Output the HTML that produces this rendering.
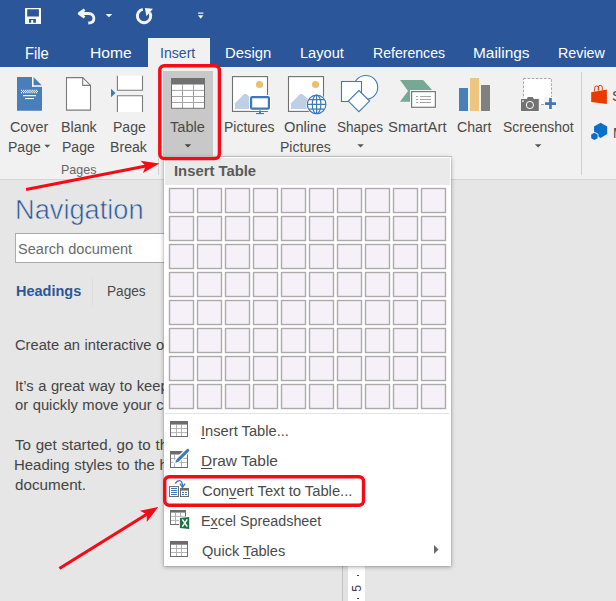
<!DOCTYPE html>
<html><head><meta charset="utf-8">
<style>
*{margin:0;padding:0;box-sizing:border-box}
html,body{width:616px;height:601px;overflow:hidden;background:#e6e6e6}
body{position:relative;font-family:"Liberation Sans",sans-serif;color:#444}
.abs{position:absolute}
.t{position:absolute;white-space:nowrap;line-height:1;transform-origin:0 0}
.light{-webkit-text-stroke:0.6px #e6e6e6}
#title{left:0;top:0;width:616px;height:67px;background:#2b579a}
#ribbon{left:0;top:67px;width:616px;height:113px;background:#f1f1f1;border-bottom:1px solid #d4d4d4}
u{text-decoration:underline;text-underline-offset:2px;text-decoration-thickness:1px}
svg{position:absolute;overflow:visible}
</style></head><body>
<div id="title" class="abs"></div>
<div id="ribbon" class="abs"></div>

<!-- QAT icons -->
<svg style="left:25px;top:8px" width="16" height="16" viewBox="0 0 16 16"><path d="M0.500 0H15.500Q16 0 16 0.500V15.500Q16 16 15.500 16H0.500Q0 16 0 15.500V0.500Q0 0 0.500 0Z M2.200 1.300V8.600H13.900V1.300Z M4 11V14.800H6.200V12H8.200V14.800H10.900V11Z" fill="#fbfaf6" fill-rule="evenodd"/></svg>
<svg style="left:0;top:0" width="220" height="30" viewBox="0 0 220 30"><path d="M84.600 9.700 L79.200 13.500 L84.600 17.300 M79.500 13.500 H88.500 C92.200 13.500 93.900 15.800 93.900 18.400 C93.900 21.200 92.200 22.900 88.300 23" fill="none" stroke="#f4f4f4" stroke-width="2.800" stroke-linejoin="round"/>
<path d="M105.600 14 H112.300 L108.950 17.300 Z" fill="#f4f4f4"/>
<path d="M142.800 9.450 A6.700 6.700 0 1 0 149.800 12.600" fill="none" stroke="#f4f4f4" stroke-width="2.900"/><path d="M144.900 8 L153 8.700 L146.400 16.200 Z" fill="#f4f4f4"/>
<rect x="198" y="12.500" width="5.400" height="1.200" fill="#f4f4f4"/><path d="M198 15.300 H203.400 L200.700 18.700 Z" fill="#f4f4f4"/></svg>

<!-- Insert tab -->
<div class="abs" style="left:147.500px;top:38px;width:62.500px;height:30px;background:#f1f1f1"></div>

<!-- Table button pressed bg -->
<div class="abs" style="left:163px;top:71px;width:50px;height:86px;background:#c8c8c8"></div>
<div class="abs" style="left:581px;top:72px;width:1px;height:103px;background:#d0d0d0"></div>
<div class="abs" style="left:158px;top:72px;width:1px;height:103px;background:#cfcfcf"></div>

<svg style="left:0;top:0" width="616" height="601" viewBox="0 0 616 601"><g><path d="M17 77H32V86.500H42V110.800H17Z" fill="#4a7ebb"/><path d="M33.400 77L42 85.400H33.400Z" fill="#4a7ebb"/>
<rect x="32" y="77" width="1.300" height="9.500" fill="#fff"/><rect x="32" y="85.500" width="10" height="1.100" fill="#fff"/>
<g fill="#fff"><rect x="23" y="95.100" width="13" height="1.100"/><rect x="25" y="98" width="9" height="1.100"/></g>
<g stroke="#fff" stroke-width="1.100" stroke-dasharray="1.060 1.060" fill="none"><path d="M21 90.400h17M21 92.600h17"/><path d="M21 91.500h17" stroke-dashoffset="1.060"/></g></g>
<path d="M66.500 77.600H82.700L90.500 85.400V110.100H66.500Z" fill="#fff" stroke="#7b7b7b" stroke-width="1.100"/><path d="M82.700 77.600V85.400H90.500" fill="none" stroke="#7b7b7b" stroke-width="1.100"/>
<path d="M117.400 75.700V90.200H142.500V75.700Z" fill="#fff" stroke="none"/><path d="M117.400 75.700V90.200H142.500V75.700" fill="none" stroke="#7b7b7b" stroke-width="1.100"/><path d="M117.400 112V95.700H142.500V112Z" fill="#fff"/><path d="M117.400 112V95.700H142.500V112" fill="none" stroke="#7b7b7b" stroke-width="1.100"/><path d="M111 88.800L115.500 93L111 97.200Z" fill="#3d78b8"/>
<rect x="171" y="78" width="34" height="30.8" fill="#fff"/><rect x="182.0" y="84.5" width="1" height="24.3" fill="#a4a4a4"/><rect x="193.0" y="84.5" width="1" height="24.3" fill="#a4a4a4"/><rect x="171" y="89.9" width="34" height="1" fill="#a4a4a4"/><rect x="171" y="96.0" width="34" height="1" fill="#a4a4a4"/><rect x="171" y="102.0" width="34" height="1" fill="#a4a4a4"/><rect x="171" y="78" width="34" height="6.5" fill="#707070"/><rect x="171.5" y="78.5" width="33" height="29.8" fill="none" stroke="#707070" stroke-width="1"/>
<path d="M184.700 144.200H191.200L187.950 147.500Z" fill="#444"/>
<rect x="232.5" y="76.600" width="35" height="34.800" fill="#fff" stroke="#6f6f6f" stroke-width="1.100"/><circle cx="259.5" cy="84.500" r="3.600" fill="#eabf72"/><path d="M235 108.900V103.300L244 94.100H246.500L252 99V108.900Z" fill="#bed0e6"/>
<rect x="249" y="95" width="22" height="16" fill="#fff"/><rect x="251.100" y="97.100" width="17.800" height="11.600" rx="1" fill="#fff" stroke="#3d78b8" stroke-width="2.200"/><rect x="259" y="110.500" width="2" height="2.600" fill="#3d78b8"/><rect x="256" y="113" width="8" height="1.100" fill="#3d78b8"/>
<rect x="288.5" y="76.600" width="35" height="34.800" fill="#fff" stroke="#6f6f6f" stroke-width="1.100"/><circle cx="315.5" cy="84.500" r="3.600" fill="#eabf72"/><path d="M291 108.900V103.300L300 94.100H302.500L308 99V108.900Z" fill="#bed0e6"/>
<circle cx="316.600" cy="104.400" r="10.500" fill="#fff"/><g fill="none" stroke="#3d78b8" stroke-width="1.200"><circle cx="316.600" cy="104.400" r="9.300"/><ellipse cx="316.600" cy="104.400" rx="4.300" ry="9.300"/><path d="M316.600 95.100V113.700M307.300 104.400H325.900M309 99.700H324.200M309 109.100H324.200"/></g>
<g fill="#fff" stroke="#3d78b8" stroke-width="1.100"><circle cx="365.800" cy="87.400" r="11.900"/><rect x="341.500" y="81.500" width="20" height="20"/><path d="M358.900 90.500L369.600 101.100L358.900 111.700L348.300 101.100Z"/></g>
<path d="M357.300 144.200H363.800L360.550 147.500Z" fill="#555"/>
<path d="M400 80.100H423.100L431.700 89.500V101.700H400L408 91Z" fill="#77a896"/><rect x="410" y="90" width="27" height="19" fill="#f4f4f4"/><rect x="411.600" y="91.600" width="23.800" height="15.700" fill="#fff" stroke="#7a7a7a" stroke-width="1.200"/><g fill="#a6a6a6"><rect x="416" y="96" width="2.200" height="1"/><rect x="420" y="96" width="11" height="1"/><rect x="416" y="99" width="2.200" height="1"/><rect x="420" y="99" width="11" height="1"/><rect x="416" y="102" width="2.200" height="1"/><rect x="420" y="102" width="11" height="1"/></g>
<rect x="459" y="88" width="9" height="23" fill="#4a80b9"/><rect x="470" y="78" width="9" height="33" fill="#edc77f"/><rect x="481" y="85" width="9" height="26" fill="#808080"/>
<rect x="523.500" y="78.500" width="28" height="26" fill="#fff" stroke="#a8a8a8" stroke-width="1" stroke-dasharray="2.600 1.500"/><rect x="520" y="98" width="20" height="14" fill="#f4f4f4"/><rect x="544" y="97" width="13" height="13" fill="#f4f4f4"/><path d="M521 99H526.800L527.800 97H532.800L533.800 99H538.800V110.900H521Z" fill="#737373"/><circle cx="529.900" cy="105" r="3.600" fill="#737373" stroke="#fff" stroke-width="1"/><rect x="522.200" y="100.400" width="1.500" height="1.500" fill="#fff"/><rect x="541.200" y="104" width="2.800" height="0.900" fill="#a8a8a8"/><path d="M545 102.200H549.100V98.100H551.800V102.200H556V104.900H551.800V108.900H549.100V104.900H545Z" fill="#3d78b8"/>
<path d="M534.900 144.200H541.400L538.150 147.500Z" fill="#555"/>
<path d="M44.300 144.700H50.300L47.300 147.700Z" fill="#555"/>
<path d="M591.200 92.300L606.900 89.400V104L591.200 101.900Z" fill="#e83b00"/><path d="M594.600 91.500V88.300Q594.600 86 596.700 86Q598.700 86 598.700 88.300V90.500M598.200 90.500V87.600Q598.200 85.300 600.200 85.300Q602.300 85.300 602.300 87.600V90" fill="none" stroke="#e83b00" stroke-width="1"/>
<path d="M600.60 122.70L607.18 126.50L607.18 134.10L600.60 137.90L594.02 134.10L594.02 126.50Z" fill="#0b6fca"/><path d="M594.40 131.80L598.38 134.10L598.38 138.70L594.40 141.00L590.42 138.70L590.42 134.10Z" fill="#f1f1f1"/><path d="M594.40 132.70L597.60 134.55L597.60 138.25L594.40 140.10L591.20 138.25L591.20 134.55Z" fill="#0b6fca"/></svg>

<!-- Nav pane -->
<div class="abs" style="left:15px;top:233px;width:160px;height:30px;background:#fff;border:1px solid #ababab"></div>
<div class="abs" style="left:92px;top:277px;width:1px;height:30px;background:#dedede"></div>
<div class="t" style="left:24.85px;top:46.00px;font-size:15.6px;color:#fff;transform:scaleX(0.9465)">File</div>
<div class="t" style="left:90.08px;top:45.00px;font-size:15.4px;color:#fff;transform:scaleX(1.0179)">Home</div>
<div class="t" style="left:159.88px;top:45.00px;font-size:15.4px;color:#2b579a;transform:scaleX(0.9159)">Insert</div>
<div class="t" style="left:224.74px;top:45.00px;font-size:15.4px;color:#fff;transform:scaleX(0.9644)">Design</div>
<div class="t" style="left:300.15px;top:45.00px;font-size:15.4px;color:#fff;transform:scaleX(0.9492)">Layout</div>
<div class="t" style="left:372.68px;top:45.00px;font-size:15.4px;color:#fff;transform:scaleX(0.9153)">References</div>
<div class="t" style="left:473.20px;top:45.00px;font-size:15.4px;color:#fff;transform:scaleX(1.0008)">Mailings</div>
<div class="t" style="left:558.47px;top:45.00px;font-size:15.4px;color:#fff;transform:scaleX(0.9275)">Review</div>
<div class="t" style="left:9.90px;top:119.00px;font-size:15.4px;color:#4a4a4a;transform:scaleX(0.9309)">Cover</div>
<div class="t" style="left:8.09px;top:139.00px;font-size:15.4px;color:#4a4a4a;transform:scaleX(0.9132)">Page</div>
<div class="t" style="left:61.37px;top:119.00px;font-size:15.4px;color:#4a4a4a;transform:scaleX(0.9285)">Blank</div>
<div class="t" style="left:62.19px;top:139.00px;font-size:15.4px;color:#4a4a4a;transform:scaleX(0.9132)">Page</div>
<div class="t" style="left:112.59px;top:119.00px;font-size:15.4px;color:#4a4a4a;transform:scaleX(0.9132)">Page</div>
<div class="t" style="left:110.28px;top:139.00px;font-size:15.4px;color:#4a4a4a;transform:scaleX(0.9188)">Break</div>
<div class="t" style="left:170.20px;top:119.00px;font-size:15.4px;color:#4a4a4a;transform:scaleX(0.9494)">Table</div>
<div class="t" style="left:223.99px;top:119.00px;font-size:15.4px;color:#4a4a4a;transform:scaleX(0.9071)">Pictures</div>
<div class="t" style="left:284.40px;top:119.00px;font-size:15.4px;color:#4a4a4a;transform:scaleX(0.9515)">Online</div>
<div class="t" style="left:279.59px;top:139.00px;font-size:15.4px;color:#4a4a4a;transform:scaleX(0.9126)">Pictures</div>
<div class="t" style="left:336.50px;top:119.00px;font-size:15.4px;color:#4a4a4a;transform:scaleX(0.8799)">Shapes</div>
<div class="t" style="left:388.40px;top:119.00px;font-size:15.4px;color:#4a4a4a;transform:scaleX(0.9636)">SmartArt</div>
<div class="t" style="left:456.70px;top:119.00px;font-size:15.4px;color:#4a4a4a;transform:scaleX(0.9150)">Chart</div>
<div class="t" style="left:502.60px;top:119.00px;font-size:15.4px;color:#4a4a4a;transform:scaleX(0.9086)">Screenshot</div>
<div class="t" style="left:612.40px;top:88.00px;font-size:15.4px;color:#4a4a4a;transform:scaleX(0.9385)">Store</div>
<div class="t" style="left:612.72px;top:125.00px;font-size:15.4px;color:#4a4a4a;transform:scaleX(0.8783)">My Add-ins</div>
<div class="t" style="left:60.63px;top:164.00px;font-size:12.8px;color:#666;transform:scaleX(0.9746)">Pages</div>
<div class="t light" style="left:15.08px;top:197.00px;font-size:27px;color:#2b579a;transform:scaleX(1.0083)">Navigation</div>
<div class="t" style="left:17.70px;top:241.00px;font-size:15.1px;color:#6a6a6a;transform:scaleX(0.9647)">Search document</div>
<div class="t" style="left:16.15px;top:283.00px;font-size:15.3px;color:#2b579a;transform:scaleX(0.9474);font-weight:bold">Headings</div>
<div class="t" style="left:106.70px;top:283.00px;font-size:15.1px;color:#4a4a4a;transform:scaleX(0.9042)">Pages</div>
<div class="t" style="left:14.90px;top:477.00px;font-size:15.4px;color:#444;transform:scaleX(0.9888)">document.</div>
<div class="t" style="left:14.70px;top:337.00px;font-size:15.4px;color:#444;transform:scaleX(0.9547);word-spacing:0.5px">Create an interactive o</div>
<div class="t" style="left:14.84px;top:378.00px;font-size:15.4px;color:#444;transform:scaleX(0.9571);word-spacing:0.5px">It’s a great way to keep</div>
<div class="t" style="left:15.30px;top:397.00px;font-size:15.4px;color:#444;transform:scaleX(0.9586);word-spacing:0.5px">or quickly move your c</div>
<div class="t" style="left:14.60px;top:437.00px;font-size:15.4px;color:#444;transform:scaleX(0.9834);word-spacing:0.5px">To get started, go to th</div>
<div class="t" style="left:13.93px;top:457.00px;font-size:15.4px;color:#444;transform:scaleX(0.9703);word-spacing:0.5px">Heading styles to the h</div>

<!-- ruler -->
<div class="abs" style="left:343px;top:560px;width:5px;height:41px;background:#e2e2e2"></div>
<div class="abs" style="left:342px;top:560px;width:1px;height:41px;background:#c2c2c2"></div>
<div class="abs" style="left:348px;top:560px;width:17px;height:41px;background:#fff"></div>
<div class="abs" style="left:357px;top:575px;width:2px;height:1px;background:#444"></div>
<div class="abs" style="left:357px;top:598px;width:2px;height:1px;background:#444"></div>
<div class="t" style="left:354.200px;top:582px;font-size:12.400px;color:#333;transform:rotate(-90deg);transform-origin:center">5</div>

<!-- Dropdown -->
<div class="abs" id="menu" style="left:164px;top:157px;width:287px;height:409px;background:#fff;box-shadow:0 0 1px rgba(0,0,0,.3),0 0.500px 4.500px rgba(0,0,0,.33)"></div>
<div class="abs" style="left:164px;top:156px;width:287.500px;height:1px;background:#bbb"></div>
<div class="abs" style="left:165px;top:158px;width:285px;height:26.600px;background:#eaeaea"></div>
<svg style="left:0;top:0" width="616" height="601" viewBox="0 0 616 601"><g fill="#f6f1f8" stroke="#ababab" stroke-width="1.4"><rect x="169.5" y="188.5" width="24" height="24"/><rect x="197.5" y="188.5" width="24" height="24"/><rect x="225.5" y="188.5" width="24" height="24"/><rect x="253.5" y="188.5" width="24" height="24"/><rect x="281.5" y="188.5" width="24" height="24"/><rect x="309.5" y="188.5" width="24" height="24"/><rect x="337.5" y="188.5" width="24" height="24"/><rect x="365.5" y="188.5" width="24" height="24"/><rect x="393.5" y="188.5" width="24" height="24"/><rect x="421.5" y="188.5" width="24" height="24"/><rect x="169.5" y="216.5" width="24" height="24"/><rect x="197.5" y="216.5" width="24" height="24"/><rect x="225.5" y="216.5" width="24" height="24"/><rect x="253.5" y="216.5" width="24" height="24"/><rect x="281.5" y="216.5" width="24" height="24"/><rect x="309.5" y="216.5" width="24" height="24"/><rect x="337.5" y="216.5" width="24" height="24"/><rect x="365.5" y="216.5" width="24" height="24"/><rect x="393.5" y="216.5" width="24" height="24"/><rect x="421.5" y="216.5" width="24" height="24"/><rect x="169.5" y="244.5" width="24" height="24"/><rect x="197.5" y="244.5" width="24" height="24"/><rect x="225.5" y="244.5" width="24" height="24"/><rect x="253.5" y="244.5" width="24" height="24"/><rect x="281.5" y="244.5" width="24" height="24"/><rect x="309.5" y="244.5" width="24" height="24"/><rect x="337.5" y="244.5" width="24" height="24"/><rect x="365.5" y="244.5" width="24" height="24"/><rect x="393.5" y="244.5" width="24" height="24"/><rect x="421.5" y="244.5" width="24" height="24"/><rect x="169.5" y="272.5" width="24" height="24"/><rect x="197.5" y="272.5" width="24" height="24"/><rect x="225.5" y="272.5" width="24" height="24"/><rect x="253.5" y="272.5" width="24" height="24"/><rect x="281.5" y="272.5" width="24" height="24"/><rect x="309.5" y="272.5" width="24" height="24"/><rect x="337.5" y="272.5" width="24" height="24"/><rect x="365.5" y="272.5" width="24" height="24"/><rect x="393.5" y="272.5" width="24" height="24"/><rect x="421.5" y="272.5" width="24" height="24"/><rect x="169.5" y="300.5" width="24" height="24"/><rect x="197.5" y="300.5" width="24" height="24"/><rect x="225.5" y="300.5" width="24" height="24"/><rect x="253.5" y="300.5" width="24" height="24"/><rect x="281.5" y="300.5" width="24" height="24"/><rect x="309.5" y="300.5" width="24" height="24"/><rect x="337.5" y="300.5" width="24" height="24"/><rect x="365.5" y="300.5" width="24" height="24"/><rect x="393.5" y="300.5" width="24" height="24"/><rect x="421.5" y="300.5" width="24" height="24"/><rect x="169.5" y="328.5" width="24" height="24"/><rect x="197.5" y="328.5" width="24" height="24"/><rect x="225.5" y="328.5" width="24" height="24"/><rect x="253.5" y="328.5" width="24" height="24"/><rect x="281.5" y="328.5" width="24" height="24"/><rect x="309.5" y="328.5" width="24" height="24"/><rect x="337.5" y="328.5" width="24" height="24"/><rect x="365.5" y="328.5" width="24" height="24"/><rect x="393.5" y="328.5" width="24" height="24"/><rect x="421.5" y="328.5" width="24" height="24"/><rect x="169.5" y="356.5" width="24" height="24"/><rect x="197.5" y="356.5" width="24" height="24"/><rect x="225.5" y="356.5" width="24" height="24"/><rect x="253.5" y="356.5" width="24" height="24"/><rect x="281.5" y="356.5" width="24" height="24"/><rect x="309.5" y="356.5" width="24" height="24"/><rect x="337.5" y="356.5" width="24" height="24"/><rect x="365.5" y="356.5" width="24" height="24"/><rect x="393.5" y="356.5" width="24" height="24"/><rect x="421.5" y="356.5" width="24" height="24"/><rect x="169.5" y="384.5" width="24" height="24"/><rect x="197.5" y="384.5" width="24" height="24"/><rect x="225.5" y="384.5" width="24" height="24"/><rect x="253.5" y="384.5" width="24" height="24"/><rect x="281.5" y="384.5" width="24" height="24"/><rect x="309.5" y="384.5" width="24" height="24"/><rect x="337.5" y="384.5" width="24" height="24"/><rect x="365.5" y="384.5" width="24" height="24"/><rect x="393.5" y="384.5" width="24" height="24"/><rect x="421.5" y="384.5" width="24" height="24"/></g></svg>
<div class="abs" style="left:165px;top:413px;width:284px;height:1px;background:#e2e5e8"></div>
<div class="t" style="left:174.20px;top:164.00px;font-size:14.2px;color:#5a5a5a;transform:scaleX(1.0446);font-weight:bold">Insert Table</div>
<div class="t" style="left:201.25px;top:423.00px;font-size:15.4px;color:#4a4a4a;transform:scaleX(0.9544)"><u>I</u>nsert Table...</div>
<div class="t" style="left:201.20px;top:453.00px;font-size:15.4px;color:#4a4a4a;transform:scaleX(1.0024)"><u>D</u>raw Table</div>
<div class="t" style="left:202.20px;top:483.00px;font-size:15.4px;color:#4a4a4a;transform:scaleX(0.9589)">Con<u>v</u>ert Text to Table...</div>
<div class="t" style="left:201.27px;top:513.00px;font-size:15.4px;color:#4a4a4a;transform:scaleX(0.9309)">E<u>x</u>cel Spreadsheet</div>
<div class="t" style="left:202.20px;top:543.00px;font-size:15.4px;color:#4a4a4a;transform:scaleX(0.9479)">Quick <u>T</u>ables</div>
<svg style="left:0;top:0" width="616" height="601" viewBox="0 0 616 601"><rect x="170" y="421" width="18" height="16" fill="#fff"/><rect x="176.0" y="424.6" width="1" height="12.4" fill="#b2b2b2"/><rect x="181.0" y="424.6" width="1" height="12.4" fill="#b2b2b2"/><rect x="170" y="428.1" width="18" height="1" fill="#b2b2b2"/><rect x="170" y="432.1" width="18" height="1" fill="#b2b2b2"/><rect x="170" y="421" width="18" height="3.6" fill="#6c6c6c"/><rect x="170.5" y="421.5" width="17" height="15" fill="none" stroke="#6c6c6c" stroke-width="1"/>
<rect x="170" y="451" width="18" height="17" fill="#fff"/><rect x="174.0" y="454.5" width="1" height="13.5" fill="#b2b2b2"/><rect x="181.0" y="454.5" width="1" height="13.5" fill="#b2b2b2"/><rect x="170" y="457.9" width="18" height="1" fill="#b2b2b2"/><rect x="170" y="461.9" width="18" height="1" fill="#b2b2b2"/><rect x="170" y="451" width="18" height="3.5" fill="#6c6c6c"/><rect x="170.5" y="451.5" width="17" height="16" fill="none" stroke="#6c6c6c" stroke-width="1"/>
<path d="M189.500 448.500L174.500 463.500" stroke="#fff" stroke-width="5.500"/><path d="M187.700 450.400L177.500 460.600" stroke="#3d78b8" stroke-width="2.900"/><path d="M176.300 459.400L178.700 461.800L175.300 462.800Z" fill="#3d78b8"/><path d="M188.800 449.300L187.300 450.800" stroke="#3d78b8" stroke-width="2.400"/>
<rect x="169.500" y="486.600" width="9" height="9.900" fill="#fff" stroke="#6c6c6c" stroke-width="1"/><g fill="#3d78b8"><rect x="171" y="488" width="6" height="1"/><rect x="171" y="490" width="6" height="1"/><rect x="171" y="492" width="6" height="1"/><rect x="171" y="494" width="6" height="1"/></g><rect x="180.500" y="488.500" width="8" height="8" fill="#fff" stroke="#6c6c6c" stroke-width="1"/><rect x="180" y="488" width="9" height="2.600" fill="#6c6c6c"/><g fill="#3d78b8"><rect x="182" y="492" width="2" height="1"/><rect x="185" y="492" width="2" height="1"/><rect x="182" y="494" width="2" height="1"/><rect x="185" y="494" width="2" height="1"/></g><path d="M175.300 483.600Q176.800 480.600 179.500 480.600Q182.500 480.600 182.500 486.800" fill="none" stroke="#3d78b8" stroke-width="1.300"/><path d="M180 483.600L182.500 487.400L185 483.600" fill="none" stroke="#3d78b8" stroke-width="1.500"/>
<rect x="170" y="510" width="16" height="15" fill="#fff"/><rect x="175.0" y="512.6" width="1" height="12.4" fill="#b2b2b2"/><rect x="180.0" y="512.6" width="1" height="12.4" fill="#b2b2b2"/><rect x="170" y="515.9" width="16" height="1" fill="#b2b2b2"/><rect x="170" y="519.9" width="16" height="1" fill="#b2b2b2"/><rect x="170" y="510" width="16" height="2.6" fill="#6c6c6c"/><rect x="170.5" y="510.5" width="15" height="14" fill="none" stroke="#6c6c6c" stroke-width="1"/>
<path d="M179 517.200L190 516V529.800L179 528.600Z" fill="#fff"/><path d="M179.900 517.900L189.200 516.900V528.900L179.900 527.900Z" fill="#1e7145"/><path d="M182.300 519.400L187.300 526.700M187.300 519.400L182.300 526.700" stroke="#fff" stroke-width="1.500"/>
<rect x="170" y="541" width="18" height="16" fill="#fff"/><rect x="176.0" y="544.7" width="1" height="12.3" fill="#b2b2b2"/><rect x="181.0" y="544.7" width="1" height="12.3" fill="#b2b2b2"/><rect x="170" y="548.0" width="18" height="1" fill="#b2b2b2"/><rect x="170" y="552.0" width="18" height="1" fill="#b2b2b2"/><rect x="170" y="541" width="18" height="3.7" fill="#6c6c6c"/><rect x="170.5" y="541.5" width="17" height="15" fill="none" stroke="#6c6c6c" stroke-width="1"/></svg>
<svg style="left:433.800px;top:545.200px" width="5" height="9" viewBox="0 0 5 9"><path d="M0 0L4.500 4.500L0 9Z" fill="#6a6a6a"/></svg>

<!-- red annotations -->
<svg style="left:0;top:0" width="616" height="601" viewBox="0 0 616 601">
<rect x="159.800" y="65.700" width="59.600" height="92.900" rx="4.500" fill="none" stroke="#f80a14" stroke-width="3.400"/>
<rect x="164.750" y="476.750" width="198.750" height="28.500" rx="4.500" fill="none" stroke="#f80a14" stroke-width="3.400"/>
<path d="M26.1 189.4L146.1 166.0" stroke="#f80a14" stroke-width="3.1" fill="none"/><path d="M159.4 163.4L142.9 172.9L145.7 166.1L140.5 160.8Z" fill="#f80a14"/>
<path d="M59.4 568.5L147.2 514.0" stroke="#f80a14" stroke-width="3.2" fill="none"/><path d="M158.2 507.1L146.8 521.9L146.7 514.2L139.9 510.7Z" fill="#f80a14"/>
</svg>
</body></html>
